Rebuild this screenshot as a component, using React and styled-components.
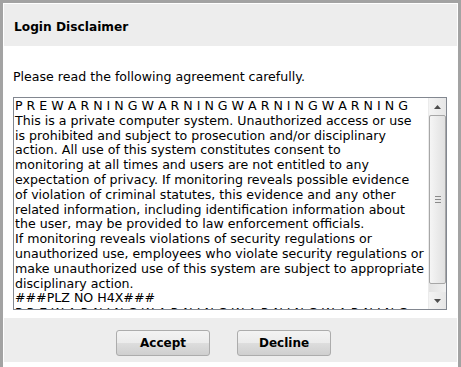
import styled, { createGlobalStyle } from 'styled-components';

const GlobalStyle = createGlobalStyle`
	html, body {
		margin: 0;
		padding: 0;
		background: #ffffff;
	}
`;

const LINES = [
	'P R E W A R N I N G W A R N I N G W A R N I N G W A R N I N G',
	'This is a private computer system. Unauthorized access or use',
	'is prohibited and subject to prosecution and/or disciplinary',
	'action. All use of this system constitutes consent to',
	'monitoring at all times and users are not entitled to any',
	'expectation of privacy. If monitoring reveals possible evidence',
	'of violation of criminal statutes, this evidence and any other',
	'related information, including identification information about',
	'the user, may be provided to law enforcement officials.',
	'If monitoring reveals violations of security regulations or',
	'unauthorized use, employees who violate security regulations or',
	'make unauthorized use of this system are subject to appropriate',
	'disciplinary action.',
	'###PLZ NO H4X###',
	'P R E W A R N I N G W A R N I N G W A R N I N G W A R N I N G',
];

const Arrow = ({ down }) => (
	<svg width='7' height='4' viewBox='0 0 7 4'>
		{down ? (
			<path d='M0 0 H7 L3.5 4 Z' fill='#4d4d4d' />
		) : (
			<path d='M0 4 H7 L3.5 0 Z' fill='#4d4d4d' />
		)}
	</svg>
);

const App = () => {
	return (
		<>
			<GlobalStyle />
			<Dialog>
				<Header>Login Disclaimer</Header>
				<Body>
					<Intro>Please read the following agreement carefully.</Intro>
					<TextBox>
						<TextContent>{LINES.join('\n')}</TextContent>
						<ScrollBar>
							<ScrollButton>
								<Arrow />
							</ScrollButton>
							<Track>
								<Thumb>
									<Grip />
								</Thumb>
							</Track>
							<ScrollButton>
								<Arrow down />
							</ScrollButton>
						</ScrollBar>
					</TextBox>
				</Body>
				<Footer>
					<Button>Accept</Button>
					<Button>Decline</Button>
				</Footer>
			</Dialog>
		</>
	);
};

export default App;

const Dialog = styled.div`
	box-sizing: border-box;
	width: 461px;
	height: 367px;
	border: 3px solid #a3a3a3;
	border-bottom: none;
	padding: 1px 1px 5px 1px;
	display: flex;
	flex-direction: column;
	background: #ffffff;
	font-family: 'DejaVu Sans', Verdana, sans-serif;
	color: #000000;
`;

const Header = styled.div`
	height: 42px;
	box-sizing: border-box;
	background: #ededed;
	display: flex;
	align-items: center;
	padding: 4px 0 0 10px;
	font-size: 12.2px;
	font-weight: bold;
`;

const Body = styled.div`
	flex: 1;
	padding: 23px 9px 0 9px;
	display: flex;
	flex-direction: column;
`;

const Intro = styled.div`
	font-size: 12.6px;
	line-height: 15px;
	margin-bottom: 13px;
`;

const TextBox = styled.div`
	width: 434px;
	height: 213px;
	box-sizing: border-box;
	border: 1px solid #828790;
	display: flex;
	overflow: hidden;
`;

const TextContent = styled.div`
	flex: 1;
	padding: 1px 0 0 1px;
	white-space: pre;
	font-size: 12.6px;
	line-height: 14.8px;
	overflow: hidden;
`;

const ScrollBar = styled.div`
	width: 17px;
	display: flex;
	flex-direction: column;
	background: linear-gradient(to right, #e3e3e3, #f0f0f0);
	border-left: 1px solid #ebebeb;
`;

const ScrollButton = styled.div`
	height: 17px;
	display: flex;
	align-items: center;
	justify-content: center;
	background: linear-gradient(to right, #f4f4f4, #e6e6e6);
`;

const Track = styled.div`
	flex: 1;
	padding: 0 0 8px 0;
	display: flex;
	flex-direction: column;
`;

const Thumb = styled.div`
	flex: 1;
	border: 1px solid #a7a7a7;
	border-radius: 2px;
	background: linear-gradient(to right, #f5f5f5, #e0e0e0);
	display: flex;
	align-items: center;
	justify-content: center;
`;

const Grip = styled.div`
	width: 6px;
	height: 7px;
	background: repeating-linear-gradient(
		to bottom,
		#8a8a8a 0,
		#8a8a8a 1px,
		transparent 1px,
		transparent 3px
	);
`;

const Footer = styled.div`
	height: 44px;
	box-sizing: border-box;
	background: #ededed;
	display: flex;
	align-items: flex-start;
	justify-content: center;
	gap: 27px;
	padding: 12px 14px 0 0;
`;

const Button = styled.button`
	width: 94px;
	height: 26px;
	border: 1px solid #acacac;
	border-radius: 3px;
	background: linear-gradient(to bottom, #f3f3f3 0%, #ebebeb 50%, #dddddd 51%, #cfcfcf 100%);
	font-family: 'DejaVu Sans', Verdana, sans-serif;
	font-size: 12px;
	font-weight: bold;
	color: #000000;
	padding: 0;
	cursor: pointer;
`;
